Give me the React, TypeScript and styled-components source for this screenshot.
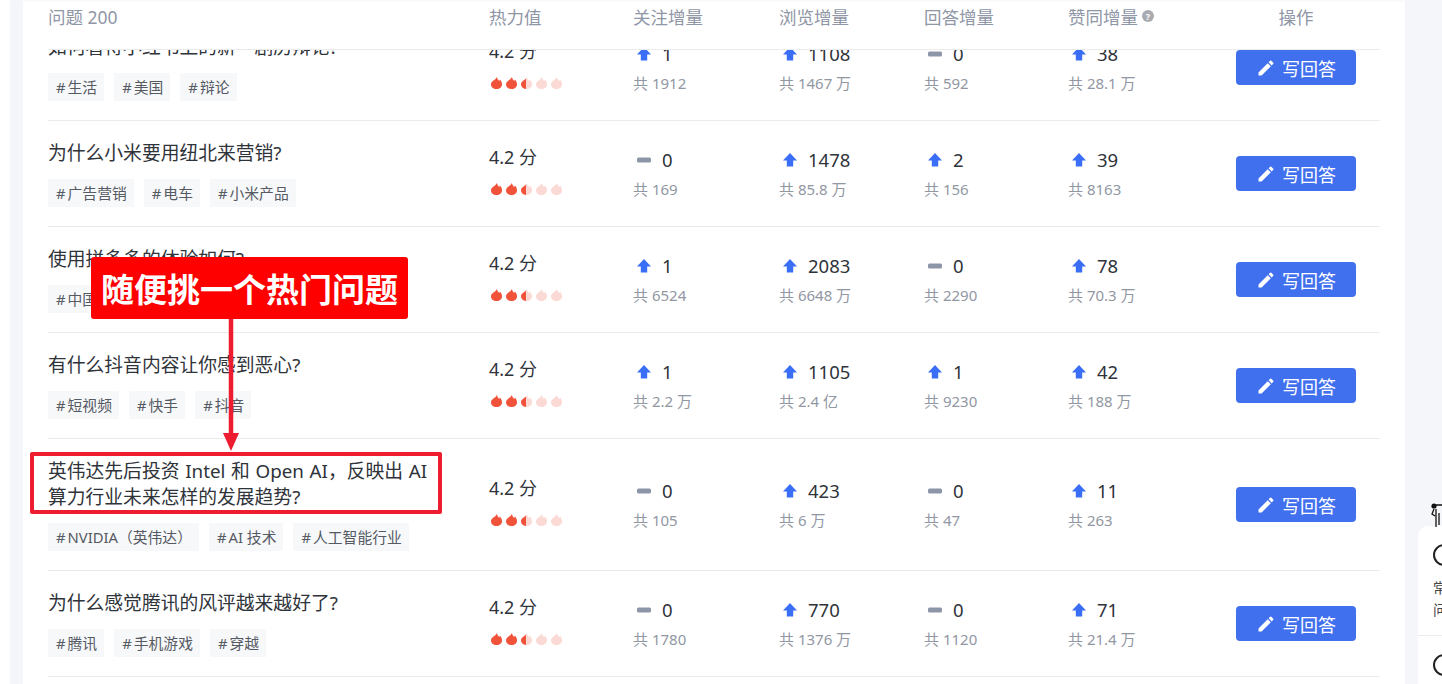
import React from 'react'
import styled, { createGlobalStyle } from 'styled-components'
import { MdEdit } from 'react-icons/md'

type Metric = { delta: string; total: string; up: boolean }
type Question = { title: string; tags: string[]; metrics: Metric[] }

const m = (delta: string, total: string, up = true): Metric => ({ delta, total, up })

const questions: Question[] = [
  {
    title: '如何看待小红书上的新一剧历辩论?',
    tags: ['生活', '美国', '辩论'],
    metrics: [m('1', '共 1912'), m('1108', '共 1467 万'), m('0', '共 592', false), m('38', '共 28.1 万')],
  },
  {
    title: '为什么小米要用纽北来营销?',
    tags: ['广告营销', '电车', '小米产品'],
    metrics: [m('0', '共 169', false), m('1478', '共 85.8 万'), m('2', '共 156'), m('39', '共 8163')],
  },
  {
    title: '使用拼多多的体验如何?',
    tags: ['中国电商', '拼多多', '网购'],
    metrics: [m('1', '共 6524'), m('2083', '共 6648 万'), m('0', '共 2290', false), m('78', '共 70.3 万')],
  },
  {
    title: '有什么抖音内容让你感到恶心?',
    tags: ['短视频', '快手', '抖音'],
    metrics: [m('1', '共 2.2 万'), m('1105', '共 2.4 亿'), m('1', '共 9230'), m('42', '共 188 万')],
  },
  {
    title: '英伟达先后投资 Intel 和 Open AI，反映出 AI 算力行业未来怎样的发展趋势?',
    tags: ['NVIDIA（英伟达）', 'AI 技术', '人工智能行业'],
    metrics: [m('0', '共 105', false), m('423', '共 6 万'), m('0', '共 47', false), m('11', '共 263')],
  },
  {
    title: '为什么感觉腾讯的风评越来越好了?',
    tags: ['腾讯', '手机游戏', '穿越'],
    metrics: [m('0', '共 1780', false), m('770', '共 1376 万'), m('0', '共 1120', false), m('71', '共 21.4 万')],
  },
]

const FLAME =
  'M5.8 0C6.2 2 7.4 3 8.2 4.2c.4-.5.6-1 .6-1.6C10.2 4 11 5.6 11 7.2 11 10 8.6 12 5.5 12S0 10 0 7.2C0 4 5 3 5.8 0Z'

const Flame: React.FC<{ fill: number; id: string }> = ({ fill, id }) => (
  <svg width="11" height="12" viewBox="0 0 11 12">
    <clipPath id={id}>
      <rect width={11 * fill} height="12" />
    </clipPath>
    <path d={FLAME} fill="#fbd9d5" />
    <path d={FLAME} fill="#f1523a" clipPath={`url(#${id})`} />
  </svg>
)

const Trend: React.FC<{ up: boolean }> = ({ up }) =>
  up ? (
    <svg width="14" height="14" viewBox="0 0 14 14">
      <path d="M7 0 14 7.5H10.2V13.5H3.8V7.5H0Z" fill="#3b6ef6" />
    </svg>
  ) : (
    <svg width="14" height="14" viewBox="0 0 14 14">
      <rect y="4.5" width="14" height="5" rx="1.5" fill="#8d95a8" />
    </svg>
  )

const App: React.FC = () => (
  <Page>
    <GlobalStyle />
    <Gutter>
      <Card>
        <HeaderRow>
          <HeaderCell>问题 200</HeaderCell>
          <HeaderCell>热力值</HeaderCell>
          <HeaderCell>关注增量</HeaderCell>
          <HeaderCell>浏览增量</HeaderCell>
          <HeaderCell>回答增量</HeaderCell>
          <HeaderCell>
            赞同增量<HelpDot>?</HelpDot>
          </HeaderCell>
          <HeaderCell $center>操作</HeaderCell>
        </HeaderRow>
        <Viewport>
          <List>
            {questions.map((q, i) => (
              <Row key={q.title}>
                <Topic>
                  <Title>{q.title}</Title>
                  <Tags>
                    {q.tags.map((t) => (
                      <Tag key={t}>
                        <Hash>#</Hash>
                        {t}
                      </Tag>
                    ))}
                  </Tags>
                </Topic>
                <Heat>
                  <Score>4.2 分</Score>
                  <Flames>
                    {[1, 1, 0.45, 0, 0].map((fill, n) => (
                      <Flame key={n} fill={fill} id={`flame-${i}-${n}`} />
                    ))}
                  </Flames>
                </Heat>
                {q.metrics.map((metric, n) => (
                  <MetricCell key={n}>
                    <Delta>
                      <Trend up={metric.up} />
                      {metric.delta}
                    </Delta>
                    <Total>{metric.total}</Total>
                  </MetricCell>
                ))}
                <Action>
                  <AnswerButton>
                    <MdEdit size={20} />
                    写回答
                  </AnswerButton>
                </Action>
              </Row>
            ))}
          </List>
        </Viewport>
      </Card>
    </Gutter>

    <SideCard>
      <SideSection>
        <SideCircle />
        <SideText>常用工具 问题反馈</SideText>
      </SideSection>
      <SideSection>
        <SideCircle />
      </SideSection>
    </SideCard>
    <Doodle width="12" height="26" viewBox="0 0 12 26">
      <circle cx="3" cy="5" r="2.6" fill="#111" />
      <path d="M5 4H11M3 8 1 13 4 15M5 8V26M8 12V24" stroke="#111" strokeWidth="1.3" fill="none" />
    </Doodle>

    <Callout>随便挑一个热门问题</Callout>
    <CalloutArrow width="20" height="133" viewBox="0 0 20 133">
      <path d="M10 0V118" stroke="#ed1c2e" strokeWidth="4.5" />
      <path d="M2 114H18L10 132Z" fill="#ed1c2e" />
    </CalloutArrow>
    <Highlight />
  </Page>
)

const GlobalStyle = createGlobalStyle`
  html, body {
    margin: 0;
    padding: 0;
    background: #fff;
  }
  * {
    box-sizing: border-box;
  }
`

const Page = styled.div`
  position: relative;
  height: 684px;
  overflow: hidden;
  padding-left: 10px;
  background: #fff;
  font-family: 'Noto Sans', 'Noto Sans CJK SC', sans-serif;
  color: #2f333a;
`

const Gutter = styled.div`
  height: 100%;
  padding-left: 13px;
  padding-right: 37px;
  background: #f5f6fa;
`

const Card = styled.main`
  display: flex;
  flex-direction: column;
  height: 100%;
  padding: 0 25px;
  border-top: 2px solid #fafafa;
  background: #fff;
`

const columns = '441px 144px 146px 145px 144px 144px 168px'

const HeaderRow = styled.div`
  display: grid;
  grid-template-columns: ${columns};
  flex: none;
  height: 48px;
  border-bottom: 1px solid #ebebeb;
`

const HeaderCell = styled.div<{ $center?: boolean }>`
  display: flex;
  align-items: center;
  justify-content: ${(p) => (p.$center ? 'center' : 'flex-start')};
  height: 28px;
  font-size: 17.5px;
  color: #8f96a6;
`

const HelpDot = styled.span`
  display: inline-flex;
  align-items: center;
  justify-content: center;
  width: 12px;
  height: 12px;
  margin-left: 4px;
  border-radius: 50%;
  background: #a9abb0;
  color: #fff;
  font-size: 9px;
  font-weight: 700;
`

const Viewport = styled.div`
  flex: 1;
  min-height: 0;
  overflow: hidden;
`

const List = styled.div`
  margin-top: -35px;
`

const Row = styled.article`
  display: grid;
  grid-template-columns: ${columns};
  padding: 19px 0;
  border-bottom: 1px solid #ebebeb;
`

const Topic = styled.div`
  padding-right: 55px;
`

const Title = styled.h2`
  margin: 0 0 13px;
  font-size: 18.8px;
  font-weight: 400;
  line-height: 26px;
  word-spacing: 0.8px;
  color: #2f333a;
`

const Tags = styled.div`
  display: flex;
  gap: 10px;
`

const Tag = styled.span`
  display: inline-flex;
  align-items: center;
  height: 28px;
  padding: 0 7px 1px 8px;
  background: #f7f8fa;
  font-size: 14.8px;
  white-space: nowrap;
  color: #555a63;
`

const Hash = styled.span`
  margin-right: 2px;
`

const Heat = styled.div`
  display: flex;
  flex-direction: column;
  justify-content: center;
  gap: 13px;
  margin-top: -2px;
`

const Score = styled.div`
  font-size: 18px;
  line-height: 26px;
`

const Flames = styled.div`
  display: flex;
  gap: 4px;
  height: 12px;
  margin-left: 2px;
  margin-bottom: 7px;

  svg {
    display: block;
  }
`

const MetricCell = styled.div`
  display: flex;
  flex-direction: column;
  justify-content: center;
  gap: 5px;
`

const Delta = styled.div`
  display: flex;
  align-items: center;
  gap: 11px;
  padding-left: 4px;
  font-size: 18.5px;
  line-height: 26px;
`

const Total = styled.div`
  font-size: 15px;
  line-height: 22px;
  color: #9197a3;
`

const Action = styled.div`
  display: flex;
  align-items: center;
  justify-content: center;
`

const AnswerButton = styled.button`
  display: flex;
  align-items: center;
  justify-content: center;
  gap: 6px;
  width: 120px;
  height: 35px;
  padding: 0;
  border: 0;
  border-radius: 4px;
  background: #4170ee;
  color: #fff;
  font-family: inherit;
  font-size: 18px;
`

const SideCard = styled.aside`
  position: absolute;
  left: 1418px;
  top: 526px;
  width: 120px;
  height: 200px;
  border-radius: 10px 0 0 0;
  background: #fff;
`

const SideSection = styled.div`
  height: 110px;
  padding: 18px 0 0 15px;
  border-bottom: 1px solid #ececec;
`

const SideCircle = styled.div`
  width: 22px;
  height: 22px;
  border: 2px solid #222;
  border-radius: 50%;
`

const SideText = styled.div`
  width: 60px;
  margin-top: 11px;
  font-size: 14px;
  line-height: 22px;
  color: #444;
`

const Doodle = styled.svg`
  position: absolute;
  left: 1431px;
  top: 501px;
`

const Callout = styled.div`
  position: absolute;
  left: 91px;
  top: 257px;
  display: flex;
  align-items: center;
  justify-content: center;
  width: 317px;
  height: 62px;
  border-radius: 3px;
  background: #ff0000;
  color: #fff;
  font-size: 33px;
  font-weight: 700;
`

const CalloutArrow = styled.svg`
  position: absolute;
  left: 221px;
  top: 319px;
`

const Highlight = styled.div`
  position: absolute;
  left: 30px;
  top: 452px;
  width: 412px;
  height: 62px;
  border: 4px solid #ed1c2e;
  border-radius: 2px;
`

export default App
